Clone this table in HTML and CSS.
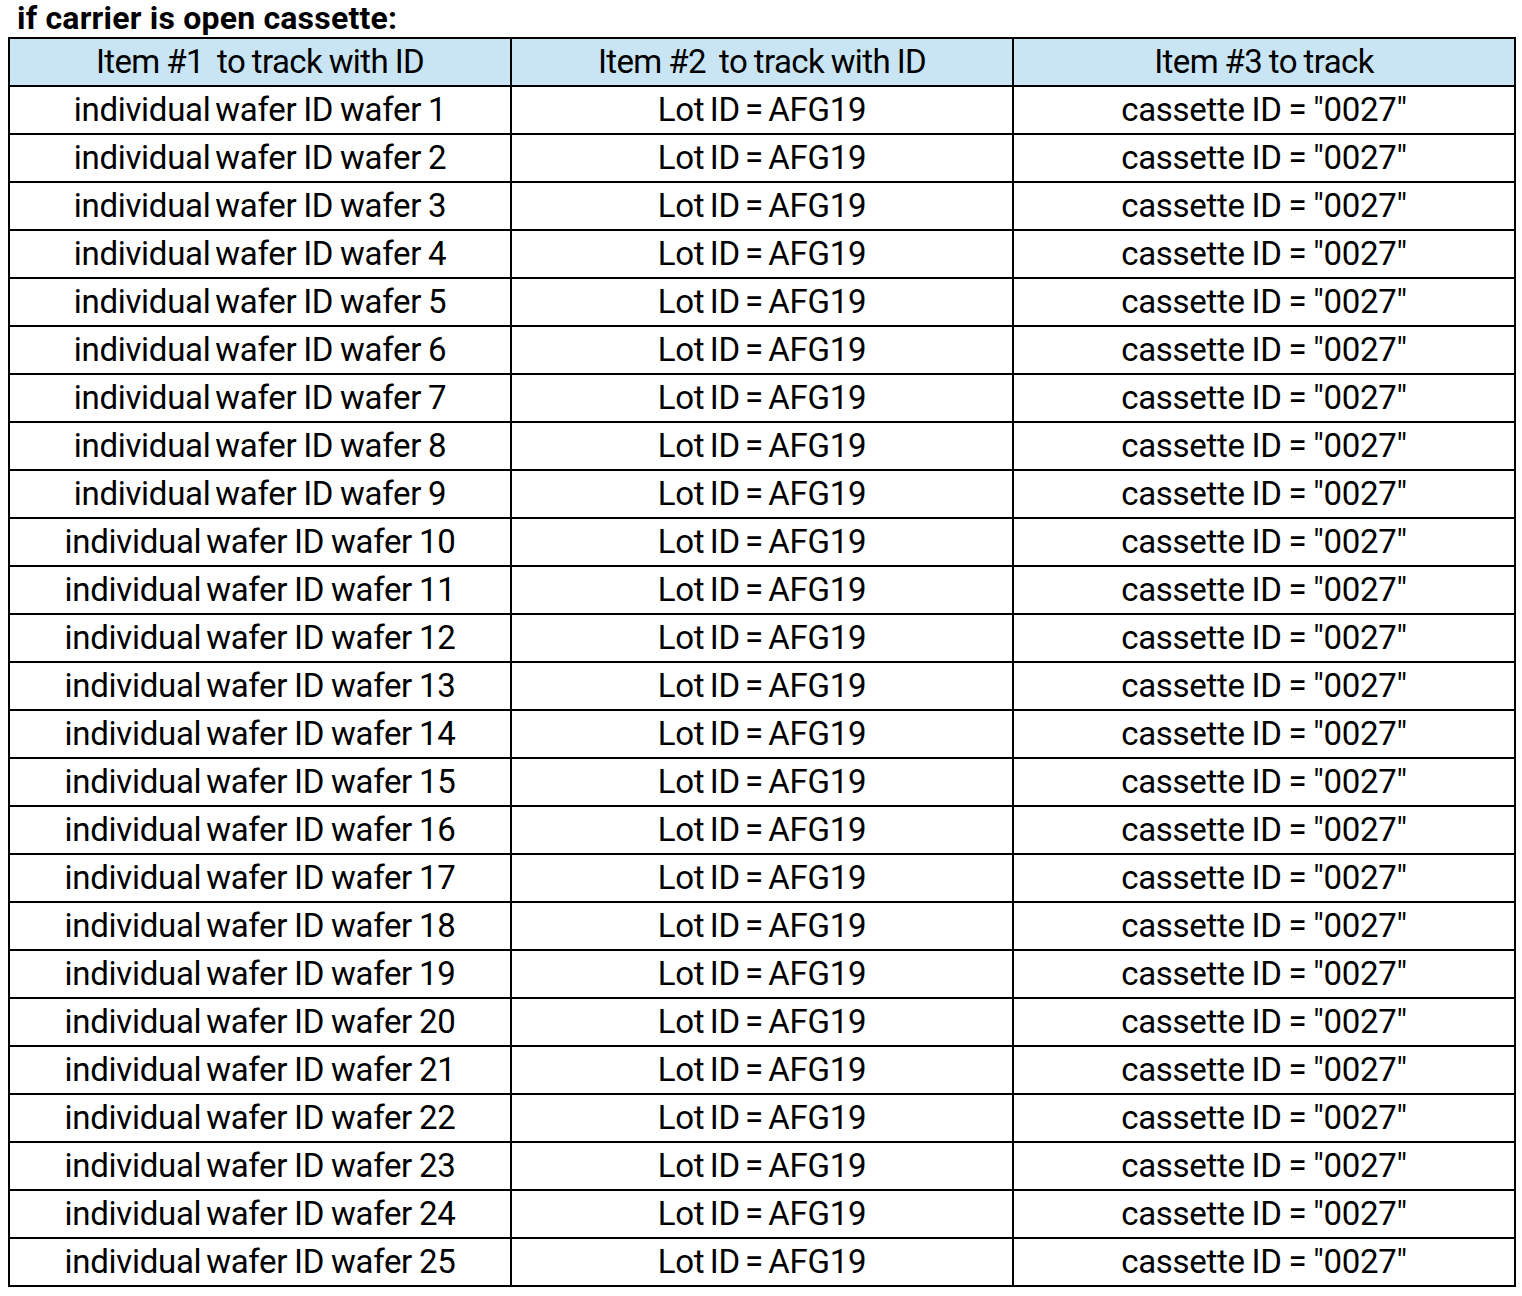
FILE: index.html
```html
<!DOCTYPE html>
<html>
<head>
<meta charset="utf-8">
<link rel="stylesheet" href="styles.css">
</head>
<body>
<div class="title">if carrier is open cassette:</div>
<table class="grid">
<thead>
<tr><th>Item #1&nbsp; to track with ID</th><th>Item #2&nbsp; to track with ID</th><th>Item #3 to track</th></tr>
</thead>
<tbody>
<tr><td><span class="tight">individual wafer</span> ID wafer 1</td><td class="lot">Lot ID = AFG19</td><td>cassette ID = "0027"</td></tr>
<tr><td><span class="tight">individual wafer</span> ID wafer 2</td><td class="lot">Lot ID = AFG19</td><td>cassette ID = "0027"</td></tr>
<tr><td><span class="tight">individual wafer</span> ID wafer 3</td><td class="lot">Lot ID = AFG19</td><td>cassette ID = "0027"</td></tr>
<tr><td><span class="tight">individual wafer</span> ID wafer 4</td><td class="lot">Lot ID = AFG19</td><td>cassette ID = "0027"</td></tr>
<tr><td><span class="tight">individual wafer</span> ID wafer 5</td><td class="lot">Lot ID = AFG19</td><td>cassette ID = "0027"</td></tr>
<tr><td><span class="tight">individual wafer</span> ID wafer 6</td><td class="lot">Lot ID = AFG19</td><td>cassette ID = "0027"</td></tr>
<tr><td><span class="tight">individual wafer</span> ID wafer 7</td><td class="lot">Lot ID = AFG19</td><td>cassette ID = "0027"</td></tr>
<tr><td><span class="tight">individual wafer</span> ID wafer 8</td><td class="lot">Lot ID = AFG19</td><td>cassette ID = "0027"</td></tr>
<tr><td><span class="tight">individual wafer</span> ID wafer 9</td><td class="lot">Lot ID = AFG19</td><td>cassette ID = "0027"</td></tr>
<tr><td><span class="tight">individual wafer</span> ID wafer 10</td><td class="lot">Lot ID = AFG19</td><td>cassette ID = "0027"</td></tr>
<tr><td><span class="tight">individual wafer</span> ID wafer 11</td><td class="lot">Lot ID = AFG19</td><td>cassette ID = "0027"</td></tr>
<tr><td><span class="tight">individual wafer</span> ID wafer 12</td><td class="lot">Lot ID = AFG19</td><td>cassette ID = "0027"</td></tr>
<tr><td><span class="tight">individual wafer</span> ID wafer 13</td><td class="lot">Lot ID = AFG19</td><td>cassette ID = "0027"</td></tr>
<tr><td><span class="tight">individual wafer</span> ID wafer 14</td><td class="lot">Lot ID = AFG19</td><td>cassette ID = "0027"</td></tr>
<tr><td><span class="tight">individual wafer</span> ID wafer 15</td><td class="lot">Lot ID = AFG19</td><td>cassette ID = "0027"</td></tr>
<tr><td><span class="tight">individual wafer</span> ID wafer 16</td><td class="lot">Lot ID = AFG19</td><td>cassette ID = "0027"</td></tr>
<tr><td><span class="tight">individual wafer</span> ID wafer 17</td><td class="lot">Lot ID = AFG19</td><td>cassette ID = "0027"</td></tr>
<tr><td><span class="tight">individual wafer</span> ID wafer 18</td><td class="lot">Lot ID = AFG19</td><td>cassette ID = "0027"</td></tr>
<tr><td><span class="tight">individual wafer</span> ID wafer 19</td><td class="lot">Lot ID = AFG19</td><td>cassette ID = "0027"</td></tr>
<tr><td><span class="tight">individual wafer</span> ID wafer 20</td><td class="lot">Lot ID = AFG19</td><td>cassette ID = "0027"</td></tr>
<tr><td><span class="tight">individual wafer</span> ID wafer 21</td><td class="lot">Lot ID = AFG19</td><td>cassette ID = "0027"</td></tr>
<tr><td><span class="tight">individual wafer</span> ID wafer 22</td><td class="lot">Lot ID = AFG19</td><td>cassette ID = "0027"</td></tr>
<tr><td><span class="tight">individual wafer</span> ID wafer 23</td><td class="lot">Lot ID = AFG19</td><td>cassette ID = "0027"</td></tr>
<tr><td><span class="tight">individual wafer</span> ID wafer 24</td><td class="lot">Lot ID = AFG19</td><td>cassette ID = "0027"</td></tr>
<tr><td><span class="tight">individual wafer</span> ID wafer 25</td><td class="lot">Lot ID = AFG19</td><td>cassette ID = "0027"</td></tr>
</tbody>
</table>
</body>
</html>
```
FILE: styles.css
```css
html, body {
  margin: 0;
  padding: 0;
  background: #ffffff;
}
body {
  padding: 0 6px 0 8px;
  font-family: Roboto, "Liberation Sans", sans-serif;
  color: #000;
}
.title {
  font-weight: 700;
  font-size: 32px;
  line-height: 37px;
  height: 37px;
  padding-left: 9px;
  box-sizing: border-box;
  letter-spacing: 0.2px;
}
.grid {
  border-collapse: collapse;
  width: 1508px;
  table-layout: fixed;
}
.grid th, .grid td {
  border: 2px solid #000;
  height: 46px;
  padding: 0;
  text-align: center;
  vertical-align: middle;
  font-size: 33px;
  font-weight: 400;
  line-height: 46px;
  letter-spacing: -0.3px;
  word-spacing: -1px;
  white-space: pre;
}
.grid th {
  background: #c9e5f3;
  letter-spacing: -0.6px;
}
.grid td.lot {
  word-spacing: -2.5px;
}
.tight {
  word-spacing: -3px;
}
```
